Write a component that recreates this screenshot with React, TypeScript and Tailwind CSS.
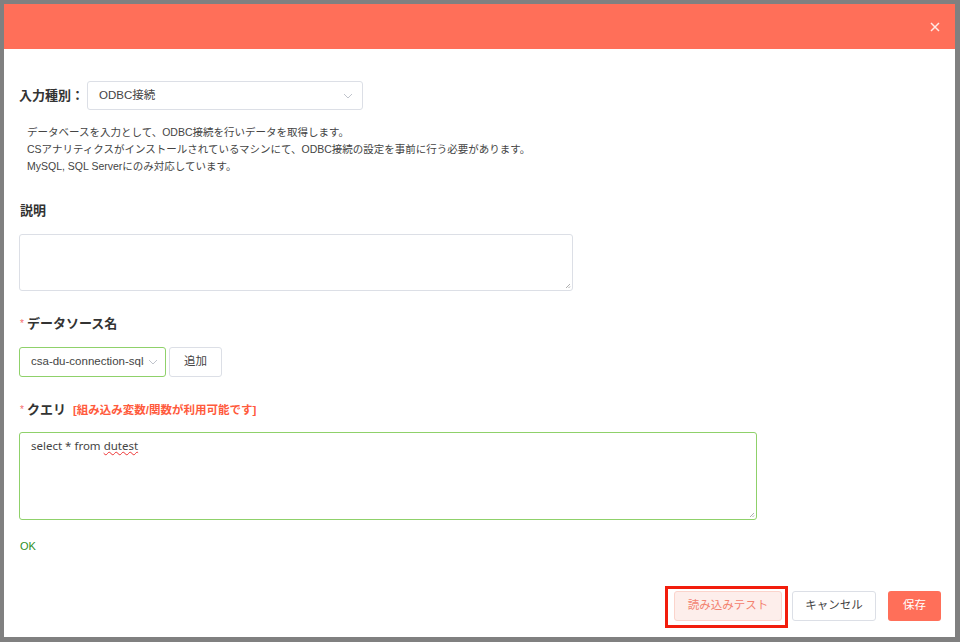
import React from "react";

const Chevron = () => (
  <svg width="10" height="6" viewBox="0 0 10 6" fill="none" className="shrink-0">
    <path d="M1 1l4 4 4-4" stroke="#c0c4cc" strokeWidth="1" />
  </svg>
);

export default function App() {
  const font = "font-['Liberation_Sans','Noto_Sans_CJK_JP',sans-serif]";
  return (
    <div className={`w-[960px] h-[642px] bg-[#808080] pt-[4px] pl-[4px] pr-[5px] pb-[5px] ${font}`}>
      <div className="w-full h-full bg-white flex flex-col">
        <div className="h-[45px] bg-[#ff6f59] flex items-center justify-end pr-[15px] shrink-0">
          <svg width="10" height="10" viewBox="0 0 10 10">
            <path d="M1 1l8 8M9 1l-8 8" stroke="#ffe9e4" strokeWidth="1.5" />
          </svg>
        </div>
        <div className="flex-1 flex flex-col pl-[15px]">
          <div className="flex items-center mt-[32px]">
            <span className="text-[13px] font-bold text-[#333] w-[68px] leading-[20px]">入力種別：</span>
            <div className="w-[276px] h-[29px] border border-[#dcdfe6] rounded-[3px] flex items-center justify-between pl-[11px] pr-[9px]">
              <span className="text-[11.5px] text-[#444]">ODBC接続</span>
              <Chevron />
            </div>
          </div>
          <div className="mt-[14px] ml-[8px] text-[10.5px] leading-[17px] text-[#444]">
            <div>データベースを入力として、ODBC接続を行いデータを取得します。</div>
            <div>CSアナリティクスがインストールされているマシンにて、ODBC接続の設定を事前に行う必要があります。</div>
            <div>MySQL, SQL Serverにのみ対応しています。</div>
          </div>
          <div className="mt-[26px] text-[13px] font-bold text-[#333] leading-[20px] pl-[1px]">説明</div>
          <div className="mt-[13px] w-[554px] h-[57px] border border-[#dcdfe6] rounded-[3px] relative">
            <svg className="absolute right-[1px] bottom-[1px]" width="6" height="6" viewBox="0 0 6 6">
              <path d="M5 1L1 5M5 3.5L3.5 5" stroke="#999" strokeWidth="0.8" />
            </svg>
          </div>
          <div className="mt-[23px] flex items-center leading-[20px]">
            <span className="text-[#f56c6c] text-[10px] w-[8px] pl-[1px]">*</span>
            <span className="text-[13px] font-bold text-[#333]">データソース名</span>
          </div>
          <div className="mt-[13px] flex items-center gap-[3px]">
            <div className="w-[147px] h-[30px] border border-[#8fd16a] rounded-[3px] flex items-center justify-between pl-[11px] pr-[7px] overflow-hidden">
              <span className="text-[11.5px] text-[#444] whitespace-nowrap overflow-hidden w-[113px]">csa-du-connection-sqlserver</span>
              <Chevron />
            </div>
            <div className="w-[53px] h-[30px] border border-[#dcdfe6] rounded-[3px] flex items-center justify-center text-[11.5px] text-[#444]">追加</div>
          </div>
          <div className="mt-[23px] flex items-center leading-[20px]">
            <span className="text-[#f56c6c] text-[10px] w-[8px] pl-[1px]">*</span>
            <span className="text-[13px] font-bold text-[#333]">クエリ</span>
            <span className="ml-[7px] text-[11.5px] font-bold text-[#ff5a3c]">[組み込み変数/関数が利用可能です]</span>
          </div>
          <div className="mt-[12px] w-[738px] h-[88px] border border-[#8fd16a] rounded-[3px] relative pl-[11px] pt-[4px] leading-[16px]">
            <span className="text-[11.5px] text-[#444] font-['Noto_Sans',sans-serif]">
              select * from <span className="underline decoration-wavy decoration-[#e33] decoration-1">dutest</span>
            </span>
            <svg className="absolute right-[1px] bottom-[1px]" width="6" height="6" viewBox="0 0 6 6">
              <path d="M5 1L1 5M5 3.5L3.5 5" stroke="#999" strokeWidth="0.8" />
            </svg>
          </div>
          <div className="mt-[18px] text-[11px] text-[#2f8f1f] leading-[16px] pl-[1px]">OK</div>
          <div className="flex-1" />
          <div className="flex justify-end items-center pr-[14px] pb-[16px]">
            <div className="relative">
              <div className="absolute left-[-9px] right-[-6px] top-[-5px] bottom-[-7px] border-[3px] border-[#f21d0c]" />
              <div className="w-[108px] h-[30px] bg-[#fdeeeb] border border-[#fbd4cc] rounded-[3px] flex items-center justify-center text-[11.5px] text-[#f3826f]">読み込みテスト</div>
            </div>
            <div className="ml-[10px] w-[84px] h-[30px] border border-[#dcdfe6] rounded-[3px] flex items-center justify-center text-[11.5px] text-[#444]">キャンセル</div>
            <div className="ml-[12px] w-[53px] h-[30px] bg-[#ff6f59] rounded-[3px] flex items-center justify-center text-[11.5px] text-white">保存</div>
          </div>
        </div>
      </div>
    </div>
  );
}
